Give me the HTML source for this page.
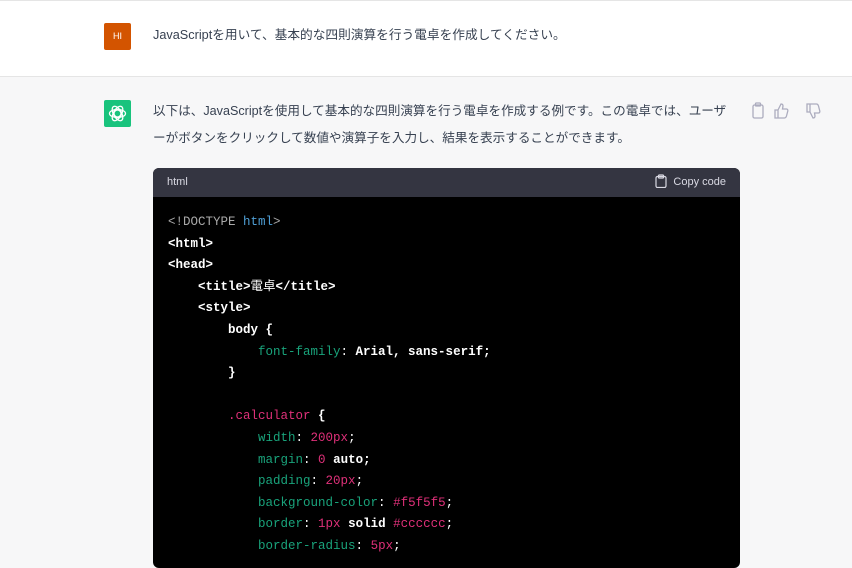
<!DOCTYPE html>
<html><head><style>
body{margin:0;width:852px;height:550px;overflow:hidden;background:#f7f7f8;font-family:"Liberation Sans","Noto Sans CJK JP",sans-serif;}
.u{position:absolute;top:0;left:0;width:852px;height:77px;background:#fff;border-top:1px solid #e5e5e5;border-bottom:1px solid #e5e5e5;box-sizing:border-box}
.av{position:absolute;width:27px;height:27px;border-radius:2px}
.t{position:absolute;left:153px;font-size:12.6px;color:#374151;white-space:nowrap}
.cb{position:absolute;left:153px;top:168px;width:587px;height:400px;background:#000;border-radius:6px;overflow:hidden}
.hd{height:29px;background:#343541;color:#d9d9e3;font-size:11px;line-height:29px;padding:0 14px;position:relative}
pre{margin:0;padding:15px 15px;font-family:"Liberation Mono","Noto Sans CJK JP",monospace;font-size:12.5px;line-height:21.6px;color:#fff}
b{font-weight:bold;color:#fff}
.g{color:#19a37b}.r{color:#df3079}.c{color:#a9a9a9}.bl{color:#4f9fd5}
</style></head><body>
<div class="u"></div>
<div class="av" style="left:104px;top:23px;background:#d35400;color:#fff;font-size:9px;line-height:27px;text-align:center">HI</div>
<div class="t" style="top:24px;font-size:12.7px">JavaScriptを用いて、基本的な四則演算を行う電卓を作成してください。</div>
<div class="av" style="left:104px;top:100px;background:#19c37d">
<svg width="27" height="27" viewBox="0 0 27 27"><g fill="none" stroke="#fff" stroke-width="1.3"><circle cx="13.5" cy="13.5" r="3.5"/><ellipse cx="13.5" cy="13.5" rx="8" ry="4"/><ellipse cx="13.5" cy="13.5" rx="8" ry="4" transform="rotate(60 13.5 13.5)"/><ellipse cx="13.5" cy="13.5" rx="8" ry="4" transform="rotate(120 13.5 13.5)"/></g></svg></div>
<div class="t" style="top:98px;line-height:27px">以下は、JavaScriptを使用して基本的な四則演算を行う電卓を作成する例です。この電卓では、ユーザ<br>ーがボタンをクリックして数値や演算子を入力し、結果を表示することができます。</div>
<svg style="position:absolute;left:751px;top:102px" width="70" height="18" viewBox="0 0 70 18" fill="none" stroke="#acacbe" stroke-width="1.3">
<rect x="2" y="3" width="10" height="13" rx="1.5"/><rect x="4.5" y="1" width="5" height="3" rx=".8"/>
<path d="M27 8v8h-3V8zM27 8l3-6c1.5 0 2 1 2 2l-.5 3h4c1 0 1.5 1 1.3 2l-1.3 5c-.3 1-1 2-2 2H27"/>
<path d="M59 10V2h-3v8zM59 10l3 6c1.5 0 2-1 2-2l-.5-3h4c1 0 1.5-1 1.3-2l-1.3-5c-.3-1-1-2-2-2H59"/>
</svg>
<div class="cb">
<div class="hd">html<span style="position:absolute;right:14px;top:0"><svg width="12" height="14" viewBox="0 0 12 14" style="vertical-align:-3px;margin-right:6px" fill="none" stroke="#d9d9e3" stroke-width="1.2"><rect x="1" y="2.5" width="10" height="11" rx="1.5"/><rect x="3.5" y="1" width="5" height="3" rx=".8"/></svg>Copy code</span></div>
<pre><span class="c">&lt;!DOCTYPE</span> <span class="bl">html</span><span class="c">&gt;</span>
<b>&lt;html&gt;</b>
<b>&lt;head&gt;</b>
    <b>&lt;title&gt;</b>電卓<b>&lt;/title&gt;</b>
    <b>&lt;style&gt;</b>
        <b>body {</b>
            <span class="g">font-family</span>: <b>Arial, sans-serif;</b>
        <b>}</b>

        <span class="r">.calculator</span> <b>{</b>
            <span class="g">width</span>: <span class="r">200px</span>;
            <span class="g">margin</span>: <span class="r">0</span> <b>auto;</b>
            <span class="g">padding</span>: <span class="r">20px</span>;
            <span class="g">background-color</span>: <span class="r">#f5f5f5</span>;
            <span class="g">border</span>: <span class="r">1px</span> <b>solid</b> <span class="r">#cccccc</span>;
            <span class="g">border-radius</span>: <span class="r">5px</span>;
</pre></div>
</body></html>
